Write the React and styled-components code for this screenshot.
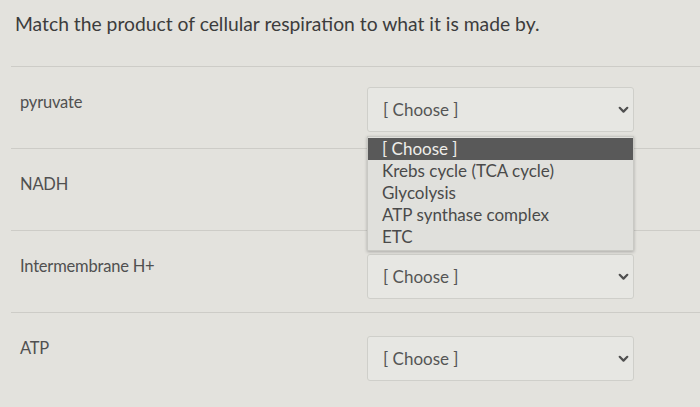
import styled, { createGlobalStyle } from "styled-components";

const GlobalStyle = createGlobalStyle`
    html, body {
        margin: 0;
        padding: 0;
        background: #e3e2dd;
    }
    body {
        font-family: Lato, "Open Sans", sans-serif;
        color: #444;
    }
`;

const answers = ["Krebs cycle (TCA cycle)", "Glycolysis", "ATP synthase complex", "ETC"];
const items = ["pyruvate", "NADH", "Intermembrane H+", "ATP"];

const Chevron = () => (
    <svg width="11" height="8" viewBox="0 0 11 8">
        <path d="M1.7 1.8 L5.5 5.6 L9.3 1.8" fill="none" stroke="#505050" strokeWidth="2.2" strokeLinecap="round" strokeLinejoin="round" />
    </svg>
);

const App = () => {
    return (
        <Wrapper>
            <GlobalStyle />
            <Title>Match the product of cellular respiration to what it is made by.</Title>
            {items.map((label, i) => (
                <Row key={label} $last={i === items.length - 1}>
                    <Label>{label}</Label>
                    <SelectWrap $offset={i === 0 ? 20 : 23}>
                        <Select>
                            <span>[ Choose ]</span>
                            <Chevron />
                        </Select>
                        {i === 0 && (
                            <Menu>
                                <Option $active>[ Choose ]</Option>
                                {answers.map((a) => (
                                    <Option key={a}>{a}</Option>
                                ))}
                            </Menu>
                        )}
                    </SelectWrap>
                </Row>
            ))}
        </Wrapper>
    );
};

const Wrapper = styled.main`
    padding-left: 11px;
    width: 689px;
    height: 407px;
    overflow: hidden;
`;

const Title = styled.h1`
    margin: 0;
    padding: 12px 0 0 4px;
    height: 54px;
    font-size: 19.3px;
    font-weight: 400;
    color: #3c3c3c;
    border-bottom: 1px solid #cdccc7;
`;

const Row = styled.div`
    display: grid;
    grid-template-columns: 356px 267px;
    height: 81px;
    border-bottom: ${(p) => (p.$last ? "none" : "1px solid #cdccc7")};
`;

const Label = styled.div`
    padding: 25px 0 0 9px;
    font-size: 16.5px;
    color: #505050;
    letter-spacing: -0.2px;
`;

const SelectWrap = styled.div`
    position: relative;
    padding-top: ${(p) => p.$offset}px;
`;

const Select = styled.div`
    box-sizing: border-box;
    height: 45px;
    display: flex;
    align-items: center;
    justify-content: space-between;
    padding: 0 4px 0 15px;
    background: #e7e7e3;
    border: 1px solid #cfcfca;
    border-radius: 3px;
    font-size: 17px;
    color: #555;
`;

const Menu = styled.div`
    position: absolute;
    top: 69px;
    left: 0;
    width: 267px;
    box-sizing: border-box;
    padding: 1px 0 2px;
    background: #e0e0dc;
    border: 1px solid #c9c9c4;
    box-shadow: 0 1px 3px rgba(0, 0, 0, 0.25);
    z-index: 2;
`;

const Option = styled.div`
    height: 22px;
    line-height: 22px;
    padding-left: 14px;
    font-size: 17px;
    color: ${(p) => (p.$active ? "#eeeeea" : "#4a4a4a")};
    background: ${(p) => (p.$active ? "#595959" : "transparent")};
`;

export default App;
